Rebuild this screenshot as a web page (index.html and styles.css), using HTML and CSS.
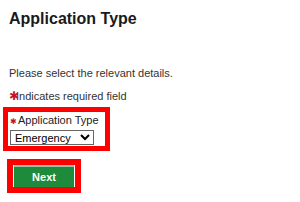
FILE: index.html
```html
<!DOCTYPE html>
<html lang="en">
<head>
    <meta charset="UTF-8">
    <title>Application Type</title>
    <link rel="stylesheet" href="styles.css">
</head>
<body>
    <div class="page">
        <h1>Application Type</h1>
        <p class="intro">Please select the relevant details.</p>
        <p class="required-note"><span class="star">&#10033;</span>Indicates required field</p>

        <div class="highlight field-box">
            <label for="appType"><span class="star small">&#10033;</span>Application Type</label>
            <select id="appType">
                <option>Emergency</option>
            </select>
        </div>

        <div class="highlight button-box">
            <button class="next-btn">Next</button>
        </div>
    </div>
</body>
</html>
```

FILE: styles.css
```css
body {
    margin: 0;
    font-family: Arial, "Liberation Sans", sans-serif;
    background: #fff;
    color: #222;
}
.page {
    padding: 8px 0 0 3px;
}
h1 {
    font-size: 16px;
    font-weight: bold;
    margin: 0 0 0 6px;
    line-height: 22px;
    color: #1a1a1a;
}
.intro {
    font-size: 11px;
    margin: 37px 0 0 6px;
    color: #333;
}
.required-note {
    font-size: 11px;
    margin: 10px 0 0 6px;
    color: #333;
}
.star {
    position: relative;
    color: #c8102e;
    font-size: 12px;
    margin-right: -3px;
}
.star.small {
    font-size: 8px;
    margin-right: 1px;
}
.highlight {
    border: 5px solid #f00;
}
.field-box {
    box-sizing: border-box;
    width: 107px;
    margin-top: 4px;
    padding: 1px 0 1px 2px;
    font-size: 11px;
}
.field-box label {
    display: block;
    line-height: 14px;
    color: #222;
}
select {
    display: block;
    box-sizing: border-box;
    margin-top: 1px;
    font-family: Arial, "Liberation Sans", sans-serif;
    font-size: 11px;
    width: 84px;
    height: 15px;
    padding: 0;
    border: 1px solid #666;
    background: #fff;
    color: #000;
}
.button-box {
    box-sizing: border-box;
    width: 74px;
    margin: 8px 0 0 4px;
    padding: 0 1px;
    border-width: 6px;
}
.next-btn {
    display: block;
    width: 60px;
    height: 22px;
    background: #1e8a3c;
    color: #fff;
    border: none;
    border-top: 2px solid #9cbfa5;
    font-family: Arial, "Liberation Sans", sans-serif;
    font-size: 11px;
    font-weight: bold;
    padding: 0;
}
```
